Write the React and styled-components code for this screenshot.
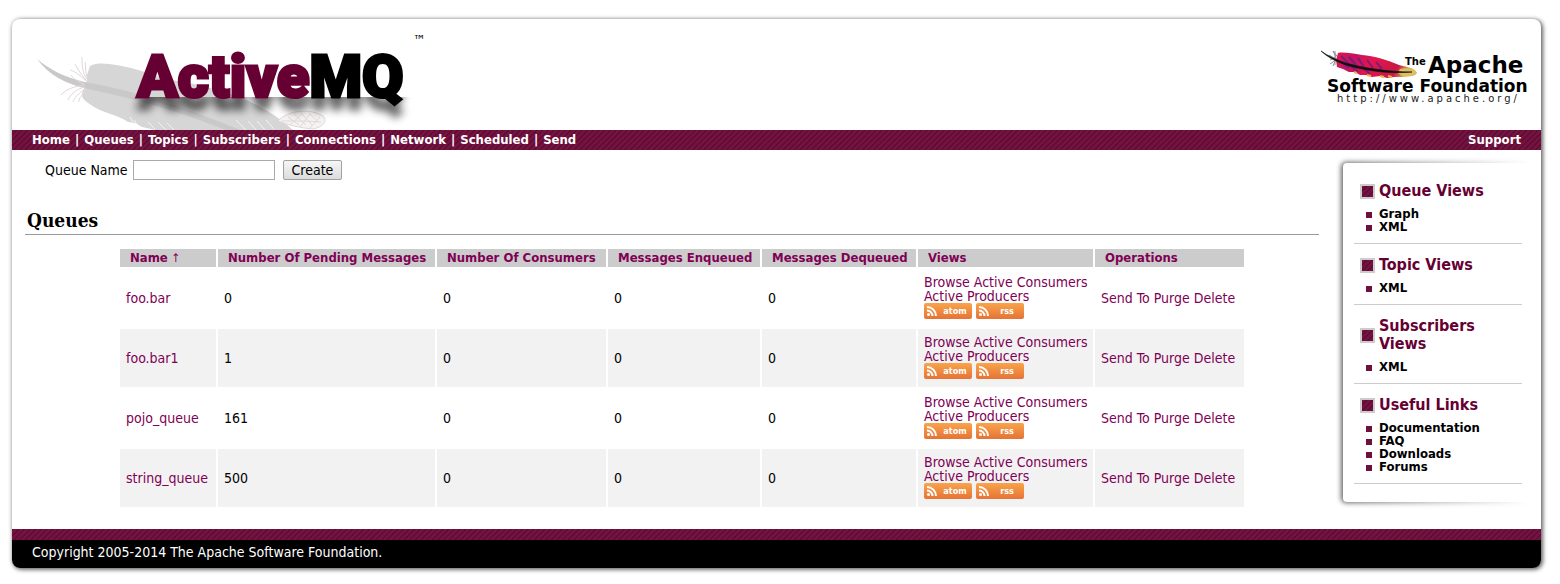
import React from "react";
import styled, { createGlobalStyle } from "styled-components";

const SANS = '"DejaVu Sans Condensed", "DejaVu Sans", Verdana, sans-serif';
const STRIPES = `repeating-linear-gradient(
  -45deg,
  #57082f 0px,
  #74133f 1px,
  #74133f 3px,
  #57082f 4px
)`;

const GlobalStyle = createGlobalStyle`
  * { box-sizing: border-box; }
  body {
    margin: 0;
    background: #fff;
    color: #000;
    font: 14px/14px ${SANS};
  }
  a { color: inherit; text-decoration: none; }
  a:hover { text-decoration: underline; }
`;

const Page = styled.div`
  padding: 19px 19px 16px 12px;
`;

const Card = styled.div`
  border-radius: 8px;
  background: #fff;
  box-shadow: 1px 1px 5px rgba(0, 0, 0, 0.6), 2px 1px 4px rgba(0, 0, 0, 0.25);
`;

const Header = styled.header`
  display: flex;
  justify-content: space-between;
  height: 111px;
  padding-right: 10px;
`;

const LogoLink = styled.a`
  display: block;
  flex: none;
`;

const Drawing = styled.svg`
  display: block;
`;

const NavBar = styled.nav`
  display: flex;
  justify-content: space-between;
  height: 20px;
  padding: 0 20px;
  background: ${STRIPES};
  color: #fff;
  font-size: 13px;
  font-weight: bold;
  line-height: 20px;
`;

const NavLinks = styled.div`
  display: flex;
  gap: 5px;
`;

const Columns = styled.div`
  display: flex;
  align-items: flex-start;
  padding: 10px 8px 20px 13px;
`;

const Main = styled.main`
  flex: 1;
  min-width: 0;
  margin-right: 4px;
`;

const CreateForm = styled.form`
  display: flex;
  align-items: center;
  height: 20px;
  padding-left: 20px;
`;

const TextBox = styled.input`
  width: 142px;
  height: 20px;
  margin: 0 8px 0 5px;
  padding: 0 3px;
  border: 1px solid #a9a9a9;
  font: inherit;
`;

const CreateButton = styled.button`
  height: 20px;
  padding: 0 8px;
  border: 1px solid #a0a0a0;
  border-radius: 2px;
  background: linear-gradient(#f6f6f6, #dcdcdc);
  color: #000;
  font: inherit;
`;

const Title = styled.h1`
  margin: 28px 20px 12px 0;
  padding: 0 2px 2px;
  border-bottom: 1px solid #999;
  font: bold 19px/24px "DejaVu Serif Condensed", "DejaVu Serif", Georgia, serif;
`;

const QueueTable = styled.table`
  width: 1128px;
  max-width: 100%;
  margin: 0 auto;
  border-spacing: 2px;
  table-layout: fixed;
`;

const Col = styled.col`
  width: ${(p) => p.$share}%;
`;

const HeadCell = styled.th`
  height: 18px;
  padding: 0 0 0 10px;
  background: #ccc;
  color: #800055;
  font-size: 13px;
  text-align: left;
  white-space: nowrap;
`;

const SortArrow = styled.span`
  font-size: 12px;
  font-weight: normal;
`;

const Row = styled.tr`
  background: ${(p) => (p.$shaded ? "#f2f2f2" : "#fff")};
`;

const Cell = styled.td`
  height: 58px;
  padding: 0 0 0 6px;
  white-space: nowrap;
`;

const TextLink = styled.a`
  color: #800055;
`;

const Feeds = styled.div`
  display: flex;
  gap: 4px;
  padding-bottom: 2px;
`;

const FeedBadge = styled.a`
  display: flex;
  align-items: center;
  width: 48px;
  height: 16px;
  padding-left: 2px;
  border-radius: 2px;
  background: linear-gradient(#f9a44a, #e57336);
  color: #fff;
  font-size: 9px;
  font-weight: bold;
`;

const FeedName = styled.span`
  flex: 1;
  text-align: center;
`;

const Sidebar = styled.aside`
  position: relative;
  isolation: isolate;
  flex: none;
  width: 190px;
  margin-top: 3px;
  padding: 19px 11px 18px;
  border-radius: 4px;
  background: #fff;
  box-shadow: -1px 0 5px 1px rgba(0, 0, 0, 0.6);

  &::after {
    content: "";
    position: absolute;
    z-index: -1;
    inset: -8px -8px -8px 0;
    background: linear-gradient(to right, rgba(255, 255, 255, 0), #fff 94%);
  }
`;

const Section = styled.section`
  padding-bottom: 10px;
  border-bottom: 1px solid #ccc;

  & + & {
    padding-top: 12px;
  }
`;

const SectionTitle = styled.h2`
  display: flex;
  align-items: center;
  gap: 4px;
  margin: 0 0 7px;
  padding-left: 6px;
  color: #660033;
  font-size: 16px;
  line-height: 18px;
`;

const Marker = styled.span`
  flex: none;
  width: 15px;
  height: 15px;
  border: 2px solid #ccc;
  background: ${STRIPES} padding-box;
`;

const LinkList = styled.ul`
  margin: 0;
  padding: 0 0 0 12px;
  list-style: none;
  font-size: 13px;
  font-weight: bold;
  line-height: 13px;
`;

const LinkItem = styled.li`
  display: flex;
  align-items: center;
  gap: 7px;

  &::before {
    content: "";
    width: 6px;
    height: 6px;
    margin-top: 3px;
    background: #6f0f3e;
  }
`;

const FooterStripe = styled.div`
  height: 11px;
  background: ${STRIPES};
`;

const Footer = styled.footer`
  height: 28px;
  padding: 0 20px;
  border-radius: 0 0 8px 8px;
  background: #000;
  color: #fff;
  line-height: 24px;
`;

const NAV = ["Home", "Queues", "Topics", "Subscribers", "Connections", "Network", "Scheduled", "Send"];

const COLUMNS = [
  ["Name", 96],
  ["Number Of Pending Messages", 217],
  ["Number Of Consumers", 169],
  ["Messages Enqueued", 152],
  ["Messages Dequeued", 154],
  ["Views", 175],
  ["Operations", 149],
];
const COLUMN_TOTAL = COLUMNS.reduce((sum, [, w]) => sum + w, 0);

const QUEUES = [
  ["foo.bar", 0],
  ["foo.bar1", 1],
  ["pojo_queue", 161],
  ["string_queue", 500],
];

const SECTIONS = [
  ["Queue Views", ["Graph", "XML"]],
  ["Topic Views", ["XML"]],
  ["Subscribers Views", ["XML"]],
  ["Useful Links", ["Documentation", "FAQ", "Downloads", "Forums"]],
];

function ActiveMQLogo() {
  return (
    <Drawing width="420" height="111" viewBox="0 0 420 111" role="img" aria-label="ActiveMQ">
      <defs>
        <filter id="cast" filterUnits="userSpaceOnUse" x="110" y="0" width="300" height="111">
          <feGaussianBlur in="SourceAlpha" stdDeviation="4" />
          <feOffset dx="1" dy="12" y="78" height="33" result="blurred" />
          <feComponentTransfer in="blurred" result="shade">
            <feFuncA type="linear" slope="0.6" />
          </feComponentTransfer>
          <feMerge>
            <feMergeNode in="shade" />
            <feMergeNode in="SourceGraphic" />
          </feMerge>
        </filter>
      </defs>
      <path
        d="M78 47 C86 43 96 45 104 46 C130 50 140 57 160 61 C190 66 225 74 248 88 C262 95 272 103 281 111 L143 111 L130 108 L123 104 L116 103 C106 96 92 94 84 89 C74 83 70 80 70 76 C70 72 76 64 75 56 Z"
        fill="#d6d6d6"
      />
      <path d="M25 40 C42 54 58 60 78 64 C120 71 178 90 228 111 L214 111 C166 92 120 79 76 70 C54 65 38 57 25 40 Z" fill="#c9c9c9" />
      <g fill="none" stroke="#e0d8d8" strokeWidth="1">
        <path d="M74 62 C68 56 62 52 58 51 M74 61 C68 54 65 49 63 45 M75 60 C70 54 70 45 70 38 M76 61 C73 54 74 48 73 43 M73 66 C62 67 53 71 49 76 M73 68 C64 70 58 76 56 81 M74 69 C67 74 62 79 61 83 M75 70 C71 76 66 79 67 83 M72 65 C64 62 60 58 59 56" />
        <path fill="#f4f2f2" d="M266 102 C276 91 298 89 311 97 C316 102 311 108 301 110 C288 109 276 106 266 102" />
        <path d="M270 102 C284 102 298 102 309 103 M276 98 L287 106 M282 95 L294 106 M289 94 L300 106 M297 94 L306 103 M278 106 L289 96 M288 108 L298 95 M298 109 L308 98" />
      </g>
      <path d="M121 103 L118 98 M126 107 L122 101 M143 110 L136 103 M154 111 L146 103 M162 111 L155 104 M234 111 L224 101 M244 111 L236 102 M253 111 L245 102 M262 110 L254 101" stroke="#fff" strokeWidth="1" opacity="0.7" />
      <text
        x="125"
        y="78"
        fontFamily='Roboto, "DejaVu Sans Condensed", sans-serif'
        fontWeight="900"
        fontSize="60"
        strokeWidth="3"
        filter="url(#cast)"
      >
        <tspan fill="#660033" stroke="#660033">Active</tspan>
        <tspan fill="#000" stroke="#000">MQ</tspan>
      </text>
      <text x="401" y="26" fontFamily={SANS} fontSize="14">™</text>
    </Drawing>
  );
}

const APACHE_FONT = { fontFamily: '"DejaVu Sans", Verdana, sans-serif', fontWeight: "bold" };

function ApacheLogo() {
  return (
    <Drawing width="212" height="111" viewBox="1319 19 212 111" role="img" aria-label="The Apache Software Foundation">
      <defs>
        <linearGradient id="plume" x1="0" y1="0" x2="1" y2="0.2">
          <stop offset="0" stopColor="#e0164d" />
          <stop offset="0.25" stopColor="#c01660" />
          <stop offset="0.5" stopColor="#e3164f" />
          <stop offset="0.85" stopColor="#c61a45" />
          <stop offset="1" stopColor="#d9b24a" />
        </linearGradient>
      </defs>
      <path d="M1330 60 L1336 57 L1333 51 L1337 56 M1330 64 L1336 60 M1333 66 L1336 59 M1329 55 L1336 59 M1335 51 V65" stroke="#8d93a0" fill="none" />
      <path d="M1338 53 C1342 52 1352 53 1362 55 C1374 56 1388 60 1399 65 L1411 68 C1416 70 1418 73 1415 75 C1409 77 1402 77 1394 77 L1387 78 L1380 76 L1372 77 L1367 75 L1360 75 L1355 72 L1349 72 L1343 69 L1337 67 L1336 60 Z" fill="url(#plume)" />
      <path d="M1341 56 L1348 63 M1349 57 L1356 65 M1358 58 L1364 67 M1367 60 L1373 68 M1376 62 L1382 69 M1342 62 L1349 68 M1352 67 L1358 72 M1364 69 L1370 74" stroke="#6c1b86" strokeWidth="2" opacity="0.8" />
      <path d="M1354 72 l3 1 M1367 75 l4 1 M1380 76 l4 1 M1388 76 l4 1" stroke="#e8b43c" strokeWidth="2" />
      <path d="M1400 69 C1408 67 1416 70 1417 73 C1414 77 1407 76 1402 76 L1398 73 Z" fill="#dcbf62" />
      <path d="M1321 51 C1335 61 1353 66 1375 69 C1388 71 1400 72 1412 72 C1400 73 1388 73 1374 71 C1352 68 1334 63 1321 51 Z" fill="#111" stroke="#111" strokeWidth="0.6" />
      <text x="1405" y="65" {...APACHE_FONT} fontSize="10">The</text>
      <text x="1428" y="73" {...APACHE_FONT} fontSize="23">Apache</text>
      <text x="1327" y="92" {...APACHE_FONT} fontSize="17">Software Foundation</text>
      <text x="1337" y="102" fontFamily="DejaVu Sans, sans-serif" fontSize="10" letterSpacing="3" fill="#222">http://www.apache.org/</text>
    </Drawing>
  );
}

function FeedIcon() {
  return (
    <Drawing width="12" height="12" viewBox="0 0 12 12" aria-hidden="true">
      <circle cx="2.5" cy="9.5" r="1.5" fill="#fff" />
      <path d="M1 5.5 A5.5 5.5 0 0 1 6.5 11 M1 2 A9 9 0 0 1 10 11" fill="none" stroke="#fff" strokeWidth="2" />
    </Drawing>
  );
}

function QueueRow({ name, pending, shaded }) {
  return (
    <Row $shaded={shaded}>
      <Cell><TextLink href="#browse">{name}</TextLink></Cell>
      <Cell>{pending}</Cell>
      <Cell>0</Cell>
      <Cell>0</Cell>
      <Cell>0</Cell>
      <Cell>
        <TextLink href="#browse">Browse</TextLink>{" "}
        <TextLink href="#consumers">Active Consumers</TextLink>
        <br />
        <TextLink href="#producers">Active Producers</TextLink>
        <Feeds>
          {["atom", "rss"].map((feed) => (
            <FeedBadge key={feed} href={`#${feed}`}>
              <FeedIcon />
              <FeedName>{feed}</FeedName>
            </FeedBadge>
          ))}
        </Feeds>
      </Cell>
      <Cell>
        <TextLink href="#send">Send To</TextLink>{" "}
        <TextLink href="#purge">Purge</TextLink>{" "}
        <TextLink href="#delete">Delete</TextLink>
      </Cell>
    </Row>
  );
}

export default function App() {
  return (
    <Page>
      <GlobalStyle />
      <Card>
        <Header>
          <LogoLink href="#activemq"><ActiveMQLogo /></LogoLink>
          <LogoLink href="#apache"><ApacheLogo /></LogoLink>
        </Header>
        <NavBar>
          <NavLinks>
            {NAV.map((item, i) => (
              <React.Fragment key={item}>
                {i > 0 && <span>|</span>}
                <a href={`#${item.toLowerCase()}`}>{item}</a>
              </React.Fragment>
            ))}
          </NavLinks>
          <a href="#support">Support</a>
        </NavBar>
        <Columns>
          <Main>
            <CreateForm onSubmit={(e) => e.preventDefault()}>
              <label htmlFor="queue-name">Queue Name</label>
              <TextBox id="queue-name" type="text" />
              <CreateButton type="submit">Create</CreateButton>
            </CreateForm>
            <Title>Queues</Title>
            <QueueTable>
              <colgroup>
                {COLUMNS.map(([label, w]) => (
                  <Col key={label} $share={(w / COLUMN_TOTAL) * 100} />
                ))}
              </colgroup>
              <thead>
                <tr>
                  {COLUMNS.map(([label], i) => (
                    <HeadCell key={label} scope="col">
                      {label}
                      {i === 0 && <SortArrow> ↑</SortArrow>}
                    </HeadCell>
                  ))}
                </tr>
              </thead>
              <tbody>
                {QUEUES.map(([name, pending], i) => (
                  <QueueRow key={name} name={name} pending={pending} shaded={i % 2 === 1} />
                ))}
              </tbody>
            </QueueTable>
          </Main>
          <Sidebar>
            {SECTIONS.map(([title, links]) => (
              <Section key={title}>
                <SectionTitle><Marker />{title}</SectionTitle>
                <LinkList>
                  {links.map((link) => (
                    <LinkItem key={link}><a href={`#${link.toLowerCase()}`}>{link}</a></LinkItem>
                  ))}
                </LinkList>
              </Section>
            ))}
          </Sidebar>
        </Columns>
        <FooterStripe />
        <Footer>Copyright 2005-2014 The Apache Software Foundation.</Footer>
      </Card>
    </Page>
  );
}
